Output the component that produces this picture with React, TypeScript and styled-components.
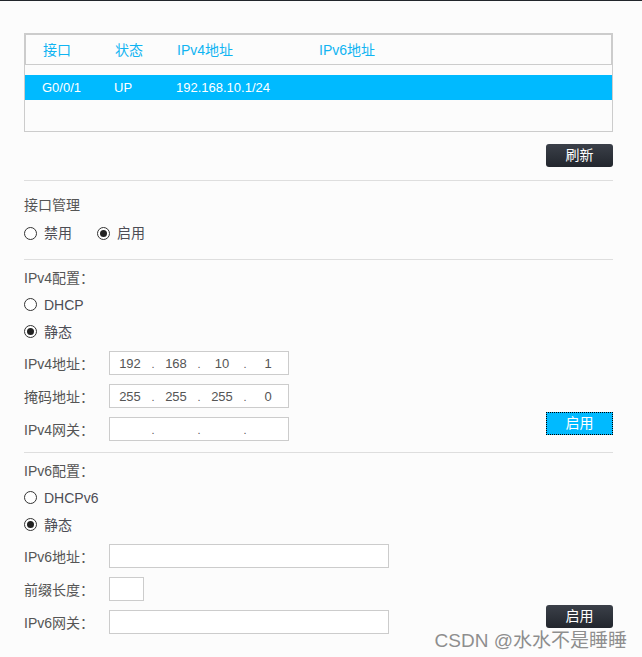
import React from "react"
import styled, { createGlobalStyle } from "styled-components"

const GlobalStyle = createGlobalStyle`
  html, body {
    margin: 0;
    padding: 0;
    background: #fcfcfc;
  }
  * {
    box-sizing: border-box;
  }
`

const font = `"Liberation Sans", "Noto Sans CJK SC", sans-serif`

const Page = styled.div`
  position: relative;
  display: flex;
  flex-direction: column;
  padding: 32px 29px 20px 24px;
  border-top: 1px solid #22262b;
  border-bottom: 3px solid #5c5c5c;
  font-family: ${font};
  color: #555;
`

const Table = styled.div`
  height: 99px;
  border: 1px solid #ccc;
  display: flex;
  flex-direction: column;
`

const TableRow = styled.div<{ $head?: boolean }>`
  display: grid;
  grid-template-columns: 72px 62px 142px 1fr;
  align-items: center;
  padding-left: 17px;
  height: ${(p) => (p.$head ? "31px" : "25px")};
  margin-top: ${(p) => (p.$head ? "0" : "10px")};
  border: ${(p) => (p.$head ? "1px solid #ccc" : "none")};
  background: ${(p) => (p.$head ? "transparent" : "#00baff")};
  color: ${(p) => (p.$head ? "#10b4f2" : "#fff")};
  font-size: ${(p) => (p.$head ? "14px" : "13px")};
  line-height: 18px;
`

const ButtonRow = styled.div`
  display: flex;
  justify-content: flex-end;
  margin-top: 12px;
`

const Button = styled.button<{ $active?: boolean }>`
  width: 67px;
  height: 23px;
  padding: 0;
  border: ${(p) => (p.$active ? "1px dotted #000" : "none")};
  border-radius: ${(p) => (p.$active ? "0" : "3px")};
  background: ${(p) =>
    p.$active ? "#00baff" : "linear-gradient(#3b4049, #22262d)"};
  color: #fff;
  font-family: ${font};
  font-size: 14px;
  line-height: 21px;
`

const Divider = styled.div<{ $top?: number }>`
  height: 1px;
  background: #dedede;
  margin-top: ${(p) => p.$top ?? 0}px;
`

const ManageSection = styled.div`
  padding: 10px 0 12px;
`

const Line = styled.div<{ $h?: number }>`
  display: flex;
  align-items: center;
  height: ${(p) => p.$h ?? 27}px;
  font-size: 14px;
  color: #555;
  line-height: 18px;
`

const RadioItem = styled.label<{ $gap?: number }>`
  display: flex;
  align-items: center;
  gap: 7px;
  margin-right: ${(p) => p.$gap ?? 0}px;
  color: #4d4d55;
`

const RadioCircle = styled.span<{ $checked?: boolean }>`
  position: relative;
  width: 13px;
  height: 13px;
  border: 1px solid #333;
  border-radius: 50%;
  background: #fff;
  &::after {
    content: "";
    display: ${(p) => (p.$checked ? "block" : "none")};
    position: absolute;
    left: 2px;
    top: 2px;
    width: 7px;
    height: 7px;
    border-radius: 50%;
    background: #222;
  }
`

const ConfigSection = styled.div`
  display: flex;
  justify-content: space-between;
  padding: 4px 0 11px;
`

const ConfigFields = styled.div`
  display: flex;
  flex-direction: column;
`

const FieldList = styled.div`
  display: flex;
  flex-direction: column;
  gap: 9px;
  margin-top: 6px;
`

const FieldRow = styled.div`
  display: flex;
  align-items: center;
  height: 24px;
`

const Label = styled.span`
  width: 85px;
  font-size: 14px;
  color: #555;
`

const Input = styled.div<{ $w: number }>`
  display: flex;
  align-items: center;
  width: ${(p) => p.$w}px;
  height: 24px;
  border: 1px solid #ccc;
  background: #fff;
  font-size: 13px;
  color: #555;
`

const Segment = styled.span`
  width: 40px;
  text-align: center;
`

const Dot = styled.span`
  width: 6px;
  text-align: center;
  padding-top: 2px;
  font-size: 11px;
`

const SideButton = styled.div`
  align-self: flex-end;
  margin-bottom: 6px;
`

const Watermark = styled.div`
  position: absolute;
  right: 15px;
  bottom: 13px;
  font-size: 19px;
  color: #8e8e8e;
  text-shadow: 0 0 2px #fff, 0 0 2px #fff;
  font-family: ${font};
`

const Radio = ({ label, checked, gap }: { label: string; checked?: boolean; gap?: number }) => (
  <RadioItem $gap={gap}>
    <RadioCircle $checked={checked} />
    {label}
  </RadioItem>
)

const IpInput = ({ parts }: { parts: string[] }) => (
  <Input $w={180}>
    {parts.map((p, i) => (
      <React.Fragment key={i}>
        {i > 0 && <Dot>.</Dot>}
        <Segment>{p}</Segment>
      </React.Fragment>
    ))}
  </Input>
)

export default function App() {
  return (
    <>
      <GlobalStyle />
      <Page>
        <Table>
          <TableRow $head>
            <span>接口</span>
            <span>状态</span>
            <span>IPv4地址</span>
            <span>IPv6地址</span>
          </TableRow>
          <TableRow>
            <span>G0/0/1</span>
            <span>UP</span>
            <span>192.168.10.1/24</span>
            <span />
          </TableRow>
        </Table>
        <ButtonRow>
          <Button>刷新</Button>
        </ButtonRow>
        <Divider $top={13} />

        <ManageSection>
          <Line $h={28}>接口管理</Line>
          <Line $h={28}>
            <Radio label="禁用" gap={25} />
            <Radio label="启用" checked />
          </Line>
        </ManageSection>
        <Divider />

        <ConfigSection>
          <ConfigFields>
            <Line>IPv4配置：</Line>
            <Line>
              <Radio label="DHCP" />
            </Line>
            <Line>
              <Radio label="静态" checked />
            </Line>
            <FieldList>
              <FieldRow>
                <Label>IPv4地址：</Label>
                <IpInput parts={["192", "168", "10", "1"]} />
              </FieldRow>
              <FieldRow>
                <Label>掩码地址：</Label>
                <IpInput parts={["255", "255", "255", "0"]} />
              </FieldRow>
              <FieldRow>
                <Label>IPv4网关：</Label>
                <IpInput parts={["", "", "", ""]} />
              </FieldRow>
            </FieldList>
          </ConfigFields>
          <SideButton>
            <Button $active>启用</Button>
          </SideButton>
        </ConfigSection>
        <Divider />

        <ConfigSection>
          <ConfigFields>
            <Line>IPv6配置：</Line>
            <Line>
              <Radio label="DHCPv6" />
            </Line>
            <Line>
              <Radio label="静态" checked />
            </Line>
            <FieldList>
              <FieldRow>
                <Label>IPv6地址：</Label>
                <Input $w={280} />
              </FieldRow>
              <FieldRow>
                <Label>前缀长度：</Label>
                <Input $w={35} />
              </FieldRow>
              <FieldRow>
                <Label>IPv6网关：</Label>
                <Input $w={280} />
              </FieldRow>
            </FieldList>
          </ConfigFields>
          <SideButton>
            <Button>启用</Button>
          </SideButton>
        </ConfigSection>

        <Watermark>CSDN @水水不是睡睡</Watermark>
      </Page>
    </>
  )
}
